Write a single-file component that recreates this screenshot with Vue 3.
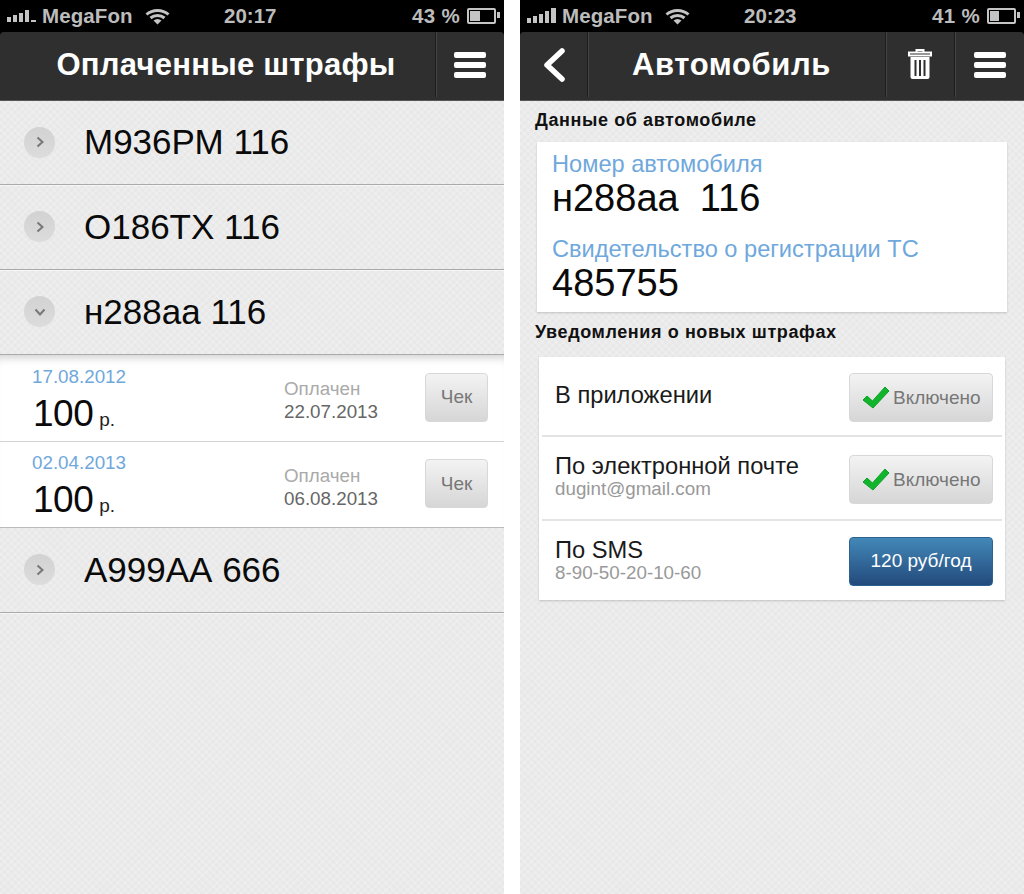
<template>
  <div class="screens">
    <section class="phone">
      <div class="status">
        <svg class="signal" width="30" height="12" viewBox="0 0 30 12">
          <rect x="0" y="7" width="4" height="5" />
          <rect x="6" y="5" width="4" height="7" />
          <rect x="12" y="3" width="4" height="9" />
          <rect x="18" y="0" width="4" height="12" />
          <rect x="24" y="10" width="5" height="2" />
        </svg>
        <span class="carrier">MegaFon</span>
        <svg class="wifi" width="25" height="17" viewBox="0 0 25 17">
          <path d="M1.500 6.500C7.500 1 17.500 1 23.500 6.500M5.500 10C9.500 6.500 15.500 6.500 19.500 10" fill="none" stroke="#c4c4c4" stroke-width="3" />
          <path d="M8.500 12.500C11 10.500 14 10.500 16.500 12.500L12.500 16.500Z" fill="#c4c4c4" />
        </svg>
        <span class="time">20:17</span>
        <span class="percent">43 %</span>
        <div class="battery"><i style="width: 43%"></i></div>
      </div>
      <header class="bar">
        <h1 class="title title-fines">Оплаченные штрафы</h1>
        <button class="bar-btn menu"><span></span><span></span><span></span></button>
      </header>
      <main class="content">
        <template v-for="car in cars" :key="car.plate">
          <div class="car">
            <span class="toggle">
              <svg width="12" height="14" viewBox="0 0 12 14">
                <path :d="car.open ? 'M1.500 4.500L6 9.500L10.500 4.500' : 'M3.500 2.500L8.500 7L3.500 11.500'" fill="none" stroke="#777" stroke-width="2" />
              </svg>
            </span>
            <span class="plate">{{ car.plate }}</span>
          </div>
          <div v-if="car.fines" class="fines">
            <div v-for="fine in car.fines" :key="fine.date" class="fine">
              <div class="fine-sum">
                <div class="fine-date">{{ fine.date }}</div>
                <div class="amount"><span>100</span><small>р.</small></div>
              </div>
              <div class="paid">
                <div class="paid-label">Оплачен</div>
                <div class="paid-date">{{ fine.paid }}</div>
              </div>
              <button class="btn check">Чек</button>
            </div>
          </div>
        </template>
      </main>
    </section>

    <section class="phone">
      <div class="status">
        <svg class="signal" width="30" height="16" viewBox="0 0 30 16">
          <rect x="0" y="10" width="4" height="5" />
          <rect x="6" y="8" width="4" height="7" />
          <rect x="12" y="6" width="4" height="9" />
          <rect x="18" y="3" width="4" height="12" />
          <rect x="24" y="0" width="5" height="15" />
        </svg>
        <span class="carrier">MegaFon</span>
        <svg class="wifi" width="25" height="17" viewBox="0 0 25 17">
          <path d="M1.500 6.500C7.500 1 17.500 1 23.500 6.500M5.500 10C9.500 6.500 15.500 6.500 19.500 10" fill="none" stroke="#c4c4c4" stroke-width="3" />
          <path d="M8.500 12.500C11 10.500 14 10.500 16.500 12.500L12.500 16.500Z" fill="#c4c4c4" />
        </svg>
        <span class="time">20:23</span>
        <span class="percent">41 %</span>
        <div class="battery"><i style="width: 41%"></i></div>
      </div>
      <header class="bar">
        <button class="bar-btn back">
          <svg width="24" height="34" viewBox="0 0 24 34">
            <path d="M20 3L5 17L20 31" fill="none" stroke="#fff" stroke-width="5.500" stroke-linecap="round" stroke-linejoin="round" />
          </svg>
        </button>
        <h1 class="title title-car">Автомобиль</h1>
        <button class="bar-btn trash">
          <svg width="24" height="31" viewBox="0 0 24 31">
            <path d="M8.500 3V1H15.500V3M1 3.500H23V6.500H1Z" fill="none" stroke="#fff" stroke-width="2" />
            <path d="M2.500 8H21.500V28A2 2 0 0 1 19.500 30H4.500A2 2 0 0 1 2.500 28Z" fill="#fff" />
            <path d="M7.500 11V27M12 11V27M16.500 11V27" stroke="#2f2f2f" stroke-width="2" />
          </svg>
        </button>
        <button class="bar-btn menu"><span></span><span></span><span></span></button>
      </header>
      <main class="content details">
        <h2 class="section">Данные об автомобиле</h2>
        <div class="card car-card">
          <div class="label">Номер автомобиля</div>
          <div class="value">н288аа&nbsp; 116</div>
          <div class="label second">Свидетельство о регистрации ТС</div>
          <div class="value">485755</div>
        </div>
        <h2 class="section notify">Уведомления о новых штрафах</h2>
        <div class="card notify-card">
          <div v-for="row in channels" :key="row.name" class="channel">
            <div class="channel-text">
              <div class="channel-name">{{ row.name }}</div>
              <div v-if="row.sub" class="channel-sub">{{ row.sub }}</div>
            </div>
            <button v-if="row.on" class="btn toggle-btn">
              <svg width="28" height="23" viewBox="0 0 28 23">
                <path d="M1 14L5 10L10.500 15L23 1L27 5L11 22Z" fill="#10b52c" stroke="#0ca026" stroke-width="1" stroke-linejoin="round" />
              </svg>
              Включено
            </button>
            <button v-else class="btn buy">120 руб/год</button>
          </div>
        </div>
      </main>
    </section>
  </div>
</template>

<script setup>
const cars = [
  { plate: 'М936РМ 116' },
  { plate: 'О186ТХ 116' },
  {
    plate: 'н288аа 116',
    open: true,
    fines: [
      { date: '17.08.2012', paid: '22.07.2013' },
      { date: '02.04.2013', paid: '06.08.2013' }
    ]
  },
  { plate: 'А999АА 666' }
]

const channels = [
  { name: 'В приложении', on: true },
  { name: 'По электронной почте', sub: 'dugint@gmail.com', on: true },
  { name: 'По SMS', sub: '8-90-50-20-10-60', on: false }
]
</script>

<style>
html, body {
  margin: 0;
  background: #fff;
}
</style>

<style scoped>
.screens {
  display: flex;
  gap: 16px;
  height: 894px;
  overflow: hidden;
  font-family: "Liberation Sans", Arial, sans-serif;
}

.phone {
  width: 504px;
  display: flex;
  flex-direction: column;
  background: #000;
}

.status {
  height: 32px;
  flex-shrink: 0;
  display: flex;
  align-items: center;
  padding-left: 7px;
  color: #bcbcbc;
  font-size: 20.5px;
  font-weight: bold;
}

.signal {
  width: 30px;
  fill: #c4c4c4;
}

.carrier {
  margin-left: 5px;
  width: 92px;
  letter-spacing: 0.1px;
}

.wifi {
  margin-left: 11px;
}

.time {
  margin-left: 54px;
  width: 54px;
}

.percent {
  margin-left: auto;
  letter-spacing: 0.3px;
}

.battery {
  width: 23px;
  height: 10px;
  margin: 0 8px 0 7px;
  padding: 1px;
  border: 2px solid #c4c4c4;
  border-radius: 2px;
  position: relative;
  box-sizing: content-box;
}

.battery::after {
  content: "";
  position: absolute;
  right: -6px;
  top: 2px;
  width: 3px;
  height: 6px;
  background: #c4c4c4;
}

.battery i {
  display: block;
  height: 100%;
  background: #c4c4c4;
}

.bar {
  height: 69px;
  flex-shrink: 0;
  display: flex;
  background: #2f2f2f;
  border-radius: 4px 4px 0 0;
  border-bottom: 1px solid #555;
  box-sizing: border-box;
}

.title {
  flex: 1;
  margin: 0;
  color: #fff;
  font-size: 31px;
  font-weight: bold;
  line-height: 65px;
  text-align: center;
  letter-spacing: 0.25px;
}

.title-fines {
  padding-left: 17px;
}

.title-car {
  padding-right: 10px;
  letter-spacing: 0.6px;
}

.bar-btn {
  display: flex;
  flex-direction: column;
  align-items: center;
  justify-content: center;
  padding: 0;
  border: 0;
  background: none;
  height: 65px;
}

.menu {
  width: 69px;
  gap: 4px;
  border-left: 1px solid #1d1d1d;
  box-shadow: inset 1px 0 0 #444;
}

.trash + .menu {
  width: 70px;
}

.menu span {
  width: 32px;
  height: 6px;
  background: #fff;
  border-radius: 2px;
}

.back {
  width: 68px;
  border-right: 1px solid #1d1d1d;
  box-shadow: 1px 0 0 #444;
}

.trash {
  width: 69px;
  border-left: 1px solid #1d1d1d;
  box-shadow: inset 1px 0 0 #444;
}

.content {
  flex: 1;
  background-color: #e8e8e8;
  background-image:
    repeating-linear-gradient(45deg, rgba(255, 255, 255, 0.16) 0 2px, transparent 2px 5px),
    repeating-linear-gradient(-45deg, rgba(255, 255, 255, 0.16) 0 2px, transparent 2px 5px);
}

.car {
  height: 85px;
  box-sizing: border-box;
  display: flex;
  align-items: center;
  padding: 0 0 1px 24px;
  border-bottom: 1px solid #aaa;
  box-shadow: 0 1px 0 #f6f6f6;
}

.car:first-child {
  height: 84px;
}

.toggle {
  width: 31px;
  height: 31px;
  flex-shrink: 0;
  display: flex;
  align-items: center;
  justify-content: center;
  border-radius: 50%;
  background: linear-gradient(#d2d2d2, #dcdcdc);
}

.plate {
  margin-left: 29px;
  font-size: 35px;
  color: #0a0a0a;
}

.fines {
  background: #fff;
  box-shadow: inset 0 9px 8px -6px rgba(0, 0, 0, 0.18);
  border-bottom: 1px solid #bbb;
}

.fine {
  height: 85px;
  box-sizing: border-box;
  display: flex;
  align-items: center;
  padding-right: 16px;
}

.fine:first-child {
  height: 87px;
  border-bottom: 1px solid #d4d4d4;
}

.fine-sum {
  flex: 1;
  padding-left: 32px;
}

.fine-date {
  color: #6fa8dc;
  font-size: 18.8px;
  line-height: 20px;
  margin-top: 13px;
}

.amount {
  margin-top: 4px;
  padding-left: 1px;
  font-size: 37px;
  line-height: 46px;
  letter-spacing: -0.5px;
  color: #0a0a0a;
}

.amount small {
  margin-left: 6px;
  font-size: 19px;
  letter-spacing: 0;
  color: #222;
}

.paid {
  width: 141px;
  margin-top: 4px;
  font-size: 18.8px;
  line-height: 23px;
}

.paid-label {
  color: #aaa;
}

.paid-date {
  color: #666;
}

.btn {
  height: 49px;
  padding: 0;
  border: 1px solid #d8d8d8;
  border-radius: 4px;
  background: linear-gradient(#f3f3f3, #d6d6d6);
  color: #777;
  font-family: inherit;
  font-size: 19px;
  flex-shrink: 0;
}

.check {
  width: 63px;
  margin-top: -2px;
}

.details {
  padding: 8px 17px 0 15px;
}

.section {
  margin: 0;
  font-size: 18px;
  line-height: 22px;
  font-weight: bold;
  color: #111;
  letter-spacing: 0.6px;
}

.notify {
  margin-top: 9px;
}

.card {
  background: #fff;
  box-shadow: 0 1px 2px rgba(0, 0, 0, 0.18);
}

.car-card {
  margin: 11px 0 0 2px;
  height: 170px;
  box-sizing: border-box;
  padding: 9px 15px 0;
}

.label {
  color: #6fa8dc;
  font-size: 23.6px;
  line-height: 26px;
}

.second {
  margin-top: 17px;
}

.value {
  font-size: 38px;
  line-height: 42px;
  color: #0a0a0a;
}

.notify-card {
  margin: 14px 2px 0 4px;
  padding: 0 3px;
}

.channel {
  height: 80px;
  box-sizing: border-box;
  display: flex;
  align-items: center;
  justify-content: space-between;
  padding: 0 9px 0 13px;
  border-bottom: 2px solid #e4e4e4;
}

.channel:nth-child(2) {
  height: 84px;
}

.channel:last-child {
  height: 79px;
  border-bottom: 0;
}

.channel-text {
  margin-top: -2px;
}

.channel:nth-child(2) .channel-text {
  margin-top: -4px;
}

.channel-name {
  font-size: 23.7px;
  line-height: 26px;
  color: #1a1a1a;
}

.channel-sub {
  font-size: 18.8px;
  line-height: 20px;
  color: #999;
}

.toggle-btn {
  width: 144px;
  display: flex;
  align-items: center;
  gap: 3px;
  padding-left: 12px;
  margin-top: 3px;
}

.buy {
  width: 144px;
  background: linear-gradient(#4288b8, #234a7c);
  border-color: #2e6391;
  color: #fff;
  margin-top: 1px;
}
</style>
